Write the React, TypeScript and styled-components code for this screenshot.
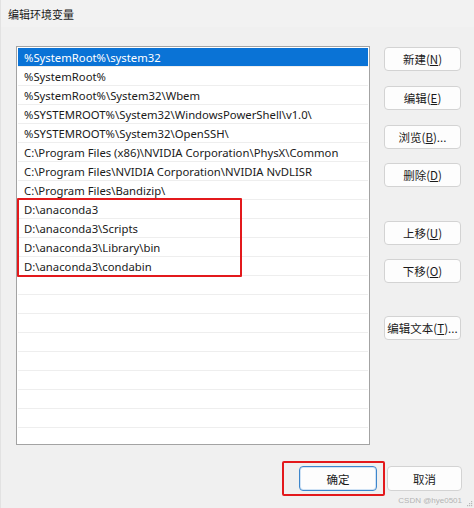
import styled, { createGlobalStyle } from 'styled-components';

const GlobalStyle = createGlobalStyle`
  html, body {
    margin: 0;
    padding: 0;
    background: #f0f0f0;
  }
  body {
    font-family: 'Noto Sans', 'Noto Sans CJK SC', sans-serif;
    color: #1a1a1a;
  }
`;

const Dialog = styled.div`
  position: relative;
  width: 474px;
  height: 508px;
  background: #f0f0f0;
  box-sizing: border-box;
  border-left: 1px solid #e2e2e2;
  overflow: hidden;
`;

const TitleBar = styled.div`
  height: 27px;
  padding-left: 7px;
  display: flex;
  align-items: center;
  font-size: 11px;
  font-family: 'Noto Sans CJK SC', sans-serif;
  color: #1a1a1a;
  background: #f2f2f2;
`;

const Body = styled.div`
  display: flex;
  padding: 19px 0 0 15px;
`;

const ListBox = styled.div`
  width: 354px;
  height: 399px;
  box-sizing: border-box;
  border: 1px solid #a3a3a3;
  background: #ffffff;
  padding: 1px;
  overflow: hidden;
`;

const Row = styled.div<{ $selected?: boolean }>`
  height: 19px;
  box-sizing: border-box;
  border-bottom: 1px solid #eeeeee;
  padding-left: 6px;
  display: flex;
  align-items: center;
  font-size: 11.3px;
  white-space: nowrap;
  background: ${(p) => (p.$selected ? '#0a73d6' : 'transparent')};
  color: ${(p) => (p.$selected ? '#ffffff' : '#1a1a1a')};
`;

const Marked = styled.div`
  position: relative;
  &::after {
    content: '';
    position: absolute;
    left: -1px;
    top: -2px;
    width: 225px;
    height: 79px;
    box-sizing: border-box;
    border: 2px solid #e3191c;
    border-radius: 1px;
    pointer-events: none;
  }
`;

const ButtonColumn = styled.div`
  display: flex;
  flex-direction: column;
  margin-left: 14px;
  padding-top: 1px;
`;

const Button = styled.button<{ $gap?: number; $default?: boolean }>`
  width: 77px;
  height: 24px;
  margin-top: ${(p) => p.$gap ?? 0}px;
  box-sizing: border-box;
  border: 1px solid ${(p) => (p.$default ? '#3d86cc' : '#d3d3d3')};
  box-shadow: ${(p) => (p.$default ? 'inset 0 0 0 1px #cfe2f5' : 'none')};
  border-radius: 4px;
  background: #fdfdfd;
  font-family: 'Noto Sans CJK SC', sans-serif;
  font-size: 11.5px;
  color: #1a1a1a;
  padding: 0;
  cursor: default;
  u {
    text-decoration: underline;
    text-underline-offset: 1px;
  }
`;

const Footer = styled.div`
  display: flex;
  justify-content: flex-end;
  align-items: center;
  padding: 16px 12px 0 0;
  gap: 2px;
`;

const Highlight = styled.div`
  display: flex;
  box-sizing: border-box;
  width: 103px;
  height: 35px;
  border: 2px solid #e3191c;
  border-radius: 2px;
  padding: 3px 6px 3px 15px;
  align-items: center;
`;

const Watermark = styled.div`
  position: absolute;
  right: 12px;
  bottom: 3px;
  font-family: 'Liberation Sans', sans-serif;
  font-size: 8px;
  color: #b4b4b4;
`;

const Grip = styled.svg`
  position: absolute;
  right: 1px;
  bottom: 1px;
`;

const paths = [
  '%SystemRoot%\\system32',
  '%SystemRoot%',
  '%SystemRoot%\\System32\\Wbem',
  '%SYSTEMROOT%\\System32\\WindowsPowerShell\\v1.0\\',
  '%SYSTEMROOT%\\System32\\OpenSSH\\',
  'C:\\Program Files (x86)\\NVIDIA Corporation\\PhysX\\Common',
  'C:\\Program Files\\NVIDIA Corporation\\NVIDIA NvDLISR',
  'C:\\Program Files\\Bandizip\\',
];

const anaconda = [
  'D:\\anaconda3',
  'D:\\anaconda3\\Scripts',
  'D:\\anaconda3\\Library\\bin',
  'D:\\anaconda3\\condabin',
];

function App() {
  const empty = Array.from({ length: 10 });

  return (
    <>
      <GlobalStyle />
      <Dialog>
        <TitleBar>编辑环境变量</TitleBar>
        <Body>
          <ListBox>
            {paths.map((p, i) => (
              <Row key={p} $selected={i === 0}>
                {p}
              </Row>
            ))}
            <Marked>
              {anaconda.map((p) => (
                <Row key={p}>{p}</Row>
              ))}
            </Marked>
            {empty.map((_, i) => (
              <Row key={'e' + i} />
            ))}
          </ListBox>
          <ButtonColumn>
            <Button>
              新建(<u>N</u>)
            </Button>
            <Button $gap={15}>
              编辑(<u>E</u>)
            </Button>
            <Button $gap={15}>
              浏览(<u>B</u>)...
            </Button>
            <Button $gap={14}>
              删除(<u>D</u>)
            </Button>
            <Button $gap={34}>
              上移(<u>U</u>)
            </Button>
            <Button $gap={14}>
              下移(<u>O</u>)
            </Button>
            <Button $gap={33}>
              编辑文本(<u>T</u>)...
            </Button>
          </ButtonColumn>
        </Body>
        <Footer>
          <Highlight>
            <Button $default style={{ width: 78, height: 25 }}>
              确定
            </Button>
          </Highlight>
          <Button style={{ width: 75, height: 25 }}>取消</Button>
        </Footer>
        <Watermark>CSDN @hye0501</Watermark>
        <Grip width="8" height="8" viewBox="0 0 8 8">
          <rect x="6" y="2" width="1.2" height="1.2" fill="#b8b8b8" />
          <rect x="4" y="4" width="1.2" height="1.2" fill="#b8b8b8" />
          <rect x="6" y="4" width="1.2" height="1.2" fill="#b8b8b8" />
          <rect x="2" y="6" width="1.2" height="1.2" fill="#b8b8b8" />
          <rect x="4" y="6" width="1.2" height="1.2" fill="#b8b8b8" />
          <rect x="6" y="6" width="1.2" height="1.2" fill="#b8b8b8" />
        </Grip>
      </Dialog>
    </>
  );
}

export default App;
